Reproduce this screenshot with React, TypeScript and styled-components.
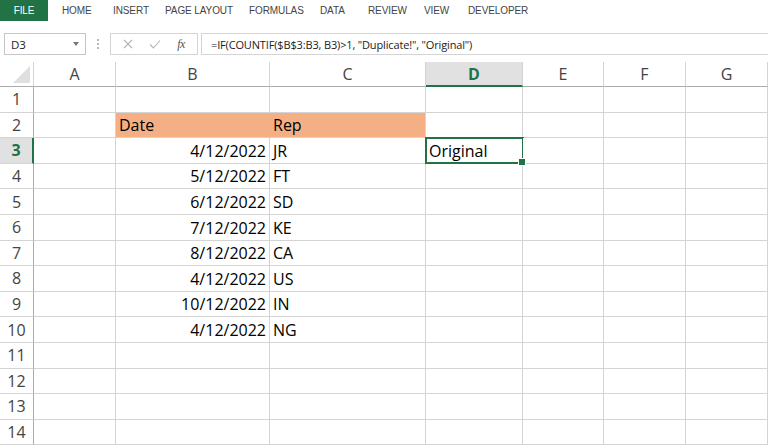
import React from 'react'
import styled, { createGlobalStyle } from 'styled-components'

const GlobalStyle = createGlobalStyle`
  html, body {
    margin: 0;
    padding: 0;
    background: #ffffff;
    overflow: hidden;
  }
  * {
    box-sizing: border-box;
  }
`

const Page = styled.div`
  width: 768px;
  height: 448px;
  overflow: hidden;
  background: #ffffff;
  font-family: 'Open Sans', 'Noto Sans', sans-serif;
  color: #222;
`

const Ribbon = styled.div`
  display: flex;
  align-items: center;
  height: 21px;
`

const Tab = styled.div<{ $width: number; $active?: boolean }>`
  width: ${props => props.$width}px;
  height: 21px;
  display: flex;
  align-items: center;
  justify-content: ${props => (props.$active ? 'center' : 'flex-start')};
  font-family: 'Liberation Sans', Arial, sans-serif;
  font-size: 10px;
  letter-spacing: -0.1px;
  color: ${props => (props.$active ? '#ffffff' : '#444444')};
  background: ${props => (props.$active ? '#217346' : 'transparent')};
`

const FormulaRow = styled.div`
  display: flex;
  align-items: center;
  height: 22px;
  margin-top: 12px;
  padding-left: 4px;
`

const NameBox = styled.div`
  width: 82px;
  height: 22px;
  border: 1px solid #c6c6c6;
  display: flex;
  align-items: center;
  justify-content: space-between;
  padding: 0 6px 0 6px;
  font-size: 11.5px;
  color: #222;
`

const Caret = styled.span`
  width: 0;
  height: 0;
  border-left: 3.5px solid transparent;
  border-right: 3.5px solid transparent;
  border-top: 4px solid #777;
`

const Grip = styled.div`
  width: 24px;
  height: 22px;
  display: flex;
  flex-direction: column;
  align-items: center;
  justify-content: center;
  gap: 2px;
  span {
    width: 2px;
    height: 2px;
    background: #b9b9b9;
  }
`

const ActionBox = styled.div`
  width: 88px;
  height: 22px;
  border: 1px solid #d4d4d4;
  display: flex;
  align-items: center;
  justify-content: space-around;
  padding: 0 4px;
  margin-right: 3px;
`

const Fx = styled.span`
  font-family: 'Liberation Serif', 'Times New Roman', serif;
  font-style: italic;
  font-size: 12px;
  color: #555;
  letter-spacing: -0.5px;
`

const FormulaBox = styled.div`
  flex: 1;
  height: 22px;
  border: 1px solid #d4d4d4;
  border-right: none;
  display: flex;
  align-items: center;
  padding-left: 9px;
  font-size: 11px;
  letter-spacing: -0.15px;
  color: #222;
  white-space: pre;
`

const Sheet = styled.div`
  margin-top: 7px;
  display: grid;
  grid-template-columns: 34px 82px 154px 156px 97px 81px 82px 1fr;
  grid-template-rows: 25px;
  grid-auto-rows: 25.6px;
`

const ColHead = styled.div<{ $active?: boolean }>`
  display: flex;
  align-items: center;
  justify-content: center;
  font-size: 16px;
  font-weight: ${props => (props.$active ? 700 : 400)};
  color: ${props => (props.$active ? '#217346' : '#444')};
  background: ${props => (props.$active ? '#e1e1e1' : '#ffffff')};
  border-right: 1px solid #d4d4d4;
  border-bottom: ${props => (props.$active ? '2px solid #217346' : '1px solid #ababab')};
`

const Corner = styled.div`
  position: relative;
  border-right: 1px solid #d4d4d4;
  border-bottom: 1px solid #ababab;
  &::after {
    content: '';
    position: absolute;
    right: 3px;
    bottom: 3px;
    width: 0;
    height: 0;
    border-left: 17px solid transparent;
    border-bottom: 17px solid #dfdfdf;
  }
`

const RowHead = styled.div<{ $active?: boolean }>`
  display: flex;
  align-items: center;
  justify-content: center;
  font-size: 16px;
  font-weight: ${props => (props.$active ? 700 : 400)};
  color: ${props => (props.$active ? '#217346' : '#444')};
  background: ${props => (props.$active ? '#e1e1e1' : '#ffffff')};
  border-right: ${props => (props.$active ? '2px solid #217346' : '1px solid #ababab')};
  border-bottom: 1px solid #d4d4d4;
`

const Cell = styled.div<{ $fill?: string; $align?: 'left' | 'right'; $merge?: boolean; $selected?: boolean }>`
  position: relative;
  display: flex;
  align-items: flex-end;
  justify-content: ${props => (props.$align === 'right' ? 'flex-end' : 'flex-start')};
  padding: 0 3px 1px 3px;
  font-size: 16px;
  line-height: 22px;
  color: #000;
  white-space: nowrap;
  background: ${props => props.$fill || '#ffffff'};
  border-right: 1px solid ${props => (props.$merge ? props.$fill : '#d4d4d4')};
  border-bottom: 1px solid #d4d4d4;
  ${props =>
    props.$selected &&
    `
    &::after {
      content: '';
      position: absolute;
      left: -1px;
      top: -1px;
      right: -2px;
      bottom: -1px;
      border: 2px solid #217346;
      pointer-events: none;
    }
    &::before {
      content: '';
      position: absolute;
      right: -4px;
      bottom: -3px;
      width: 6px;
      height: 6px;
      background: #217346;
      border: 1px solid #ffffff;
      z-index: 2;
    }
  `}
`

const tabs = [
  { label: 'HOME', width: 51 },
  { label: 'INSERT', width: 52 },
  { label: 'PAGE LAYOUT', width: 84 },
  { label: 'FORMULAS', width: 71 },
  { label: 'DATA', width: 48 },
  { label: 'REVIEW', width: 56 },
  { label: 'VIEW', width: 44 },
  { label: 'DEVELOPER', width: 90 },
]

const columns = ['A', 'B', 'C', 'D', 'E', 'F', 'G']

type Row = { date?: string; rep?: string; result?: string; header?: boolean }

const rows: Row[] = [
  {},
  { header: true },
  { date: '4/12/2022', rep: 'JR', result: 'Original' },
  { date: '5/12/2022', rep: 'FT' },
  { date: '6/12/2022', rep: 'SD' },
  { date: '7/12/2022', rep: 'KE' },
  { date: '8/12/2022', rep: 'CA' },
  { date: '4/12/2022', rep: 'US' },
  { date: '10/12/2022', rep: 'IN' },
  { date: '4/12/2022', rep: 'NG' },
  {},
  {},
  {},
  {},
]

const ORANGE = '#f4b084'

const CrossIcon = () => (
  <svg width="10" height="10" viewBox="0 0 10 10">
    <path d="M1 1 L9 9 M9 1 L1 9" stroke="#b4b4b4" strokeWidth="1.1" fill="none" />
  </svg>
)

const CheckIcon = () => (
  <svg width="12" height="10" viewBox="0 0 12 10">
    <path d="M1 5.5 L4.5 9 L11 1.5" stroke="#b4b4b4" strokeWidth="1.1" fill="none" />
  </svg>
)

export default function App() {
  return (
    <Page>
      <GlobalStyle />
      <Ribbon>
        <Tab $width={48} $active>
          FILE
        </Tab>
        <Tab $width={14} />
        {tabs.map(t => (
          <Tab key={t.label} $width={t.width}>
            {t.label}
          </Tab>
        ))}
      </Ribbon>

      <FormulaRow>
        <NameBox>
          D3
          <Caret />
        </NameBox>
        <Grip>
          <span />
          <span />
          <span />
        </Grip>
        <ActionBox>
          <CrossIcon />
          <CheckIcon />
          <Fx>fx</Fx>
        </ActionBox>
        <FormulaBox>=IF(COUNTIF($B$3:B3, B3)&gt;1, "Duplicate!", "Original")</FormulaBox>
      </FormulaRow>

      <Sheet>
        <Corner />
        {columns.map(c => (
          <ColHead key={c} $active={c === 'D'}>
            {c}
          </ColHead>
        ))}
        {rows.map((r, i) => {
          const n = i + 1
          return (
            <React.Fragment key={n}>
              <RowHead $active={n === 3}>{n}</RowHead>
              <Cell />
              {r.header ? (
                <>
                  <Cell $fill={ORANGE} $merge>
                    Date
                  </Cell>
                  <Cell $fill={ORANGE}>Rep</Cell>
                </>
              ) : (
                <>
                  <Cell $align="right">{r.date}</Cell>
                  <Cell>{r.rep}</Cell>
                </>
              )}
              <Cell $selected={n === 3}>{r.result}</Cell>
              <Cell />
              <Cell />
              <Cell />
            </React.Fragment>
          )
        })}
      </Sheet>
    </Page>
  )
}
